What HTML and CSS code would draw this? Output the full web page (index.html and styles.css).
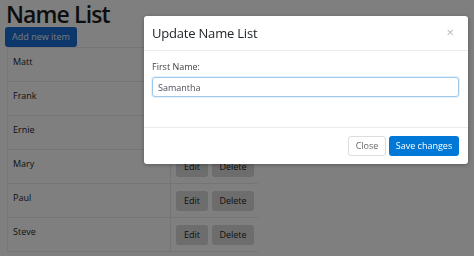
FILE: index.html
```html
<!DOCTYPE html>
<html lang="en">
<head>
<meta charset="utf-8">
<title>Name List</title>
<link rel="stylesheet" href="styles.css">
</head>
<body>
<div class="page">
  <h1 class="title">Name List</h1>
  <button class="btn btn-primary btn-add">Add new item</button>
  <table class="names">
    <tbody>
      <tr><td class="name">Matt</td><td class="actions"><button class="btn btn-light">Edit</button><button class="btn btn-light">Delete</button></td></tr>
      <tr><td class="name">Frank</td><td class="actions"><button class="btn btn-light">Edit</button><button class="btn btn-light">Delete</button></td></tr>
      <tr><td class="name">Ernie</td><td class="actions"><button class="btn btn-light">Edit</button><button class="btn btn-light">Delete</button></td></tr>
      <tr><td class="name">Mary</td><td class="actions"><button class="btn btn-light">Edit</button><button class="btn btn-light">Delete</button></td></tr>
      <tr><td class="name">Paul</td><td class="actions"><button class="btn btn-light">Edit</button><button class="btn btn-light">Delete</button></td></tr>
      <tr><td class="name">Steve</td><td class="actions"><button class="btn btn-light">Edit</button><button class="btn btn-light">Delete</button></td></tr>
    </tbody>
  </table>
</div>
<div class="backdrop"></div>
<div class="modal">
  <div class="modal-header">
    <h5 class="modal-title">Update Name List</h5>
    <button class="close" aria-label="Close">&times;</button>
  </div>
  <div class="modal-body">
    <label class="label" for="first">First Name:</label>
    <input class="input" id="first" type="text" value="Samantha">
  </div>
  <div class="modal-footer">
    <button class="btn btn-close">Close</button>
    <button class="btn btn-save">Save changes</button>
  </div>
</div>
</body>
</html>
```
FILE: styles.css
```css
* { box-sizing: border-box; }
html, body { margin: 0; padding: 0; }
body {
  width: 474px;
  height: 256px;
  overflow: hidden;
  background: #ffffff;
  font-family: "Open Sans", "Noto Sans", sans-serif;
  font-size: 9px;
  color: #212529;
}
.page {
  padding: 1px 5px 0 5px;
}
.title {
  margin: 0;
  padding-left: 1px;
  font-size: 23px;
  line-height: 26px;
  font-weight: 600;
  letter-spacing: -0.9px;
  color: #1a1d20;
}
.btn {
  font-family: inherit;
  font-size: 9px;
  height: 20px;
  line-height: 18px;
  padding: 0 6px;
  border: 1px solid transparent;
  border-radius: 3px;
  cursor: pointer;
}
.btn-primary {
  background: #1a6fd4;
  color: #e8eef6;
}
.btn-add {
  display: block;
  width: 72px;
  padding: 0;
}
.names {
  margin-left: 2px;
  width: 251px;
  border-collapse: collapse;
  border-left: 1px solid #f0f0f0;
}
.names tr {
  height: 34px;
  border-top: 1px solid #eaeaea;
}
.names tr:last-child { border-bottom: 1px solid #eaeaea; }
.names td {
  vertical-align: top;
  padding: 7px 4px 0 5px;
}
.name {
  width: 164px;
  line-height: 14px;
  padding-top: 8px;
  border-right: 1px solid #eaeaea;
}
.actions {
  display: flex;
  gap: 4px;
}
.btn-light {
  background: #dadada;
  color: #1a1d20;
  padding: 0;
}
.actions .btn-light:first-child { width: 32px; }
.actions .btn-light:last-child { width: 42px; }
.backdrop {
  position: fixed;
  inset: 0;
  background: rgba(0, 0, 0, 0.5);
}
.modal {
  position: fixed;
  left: 144px;
  top: 16px;
  width: 324px;
  background: #ffffff;
  border-radius: 3px;
  box-shadow: 0 1px 4px rgba(0, 0, 0, 0.3);
}
.modal-header {
  display: flex;
  justify-content: space-between;
  align-items: flex-start;
  padding: 8px;
  height: 35px;
  border-bottom: 1px solid #e9ecef;
}
.modal-title {
  margin: 0;
  font-size: 13px;
  line-height: 18px;
  font-weight: 500;
  letter-spacing: -0.2px;
  color: #212529;
}
.close {
  margin: 0 2px 0 0;
  padding: 0 4px;
  border: 0;
  background: transparent;
  font-family: inherit;
  font-size: 13px;
  line-height: 16px;
  color: #b5b5b5;
}
.modal-body {
  height: 76px;
  padding: 9px 8px 8px 8px;
  display: flex;
  flex-direction: column;
  align-items: flex-start;
}
.label {
  font-size: 9px;
  line-height: 13px;
  margin-bottom: 4px;
  color: #444;
}
.input {
  width: 307px;
  height: 20px;
  padding: 0 5px;
  font-family: inherit;
  font-size: 9px;
  color: #495057;
  border: 1px solid #9fc9ea;
  border-radius: 3px;
  box-shadow: 0 0 0 1px rgba(160, 200, 235, 0.25);
  outline: none;
}
.modal-footer {
  display: flex;
  justify-content: flex-end;
  gap: 3px;
  padding: 8px 9px 8px 8px;
  height: 37px;
  border-top: 1px solid #e9ecef;
}
.btn-close {
  width: 38px;
  padding: 0;
  background: #ffffff;
  border-color: #dddddd;
  color: #666666;
}
.btn-save {
  width: 70px;
  padding: 0;
  background: #0078d7;
  color: #ffffff;
}
```
